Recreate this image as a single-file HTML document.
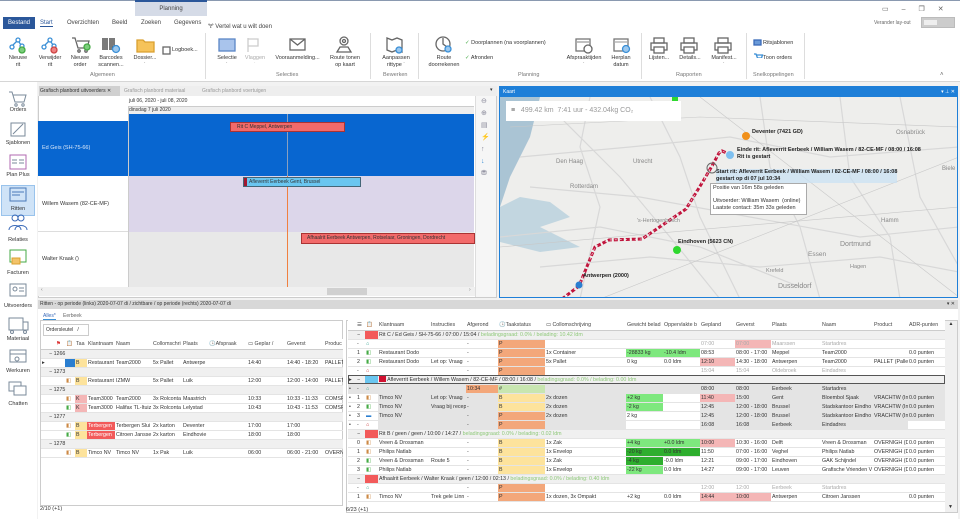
<!DOCTYPE html>
<html><head><meta charset="utf-8">
<style>
*{margin:0;padding:0;box-sizing:border-box}
body{width:960px;height:519px;overflow:hidden;background:#fff;font-family:"Liberation Sans",sans-serif;font-size:6px;color:#333;position:relative}
.a{position:absolute;white-space:nowrap}
.rl{font-size:5.5px;color:#333;text-align:center;line-height:6.5px}
.gl{font-size:5.5px;color:#777;top:72px}
.sep{position:absolute;top:33px;width:1px;height:46px;background:#ddd}
.sb{position:absolute;left:0;width:36px;text-align:center;font-size:5.5px;color:#333}
table{border-collapse:collapse;table-layout:fixed;position:absolute}
td{height:8.6px;font-size:5.3px;line-height:8px;white-space:nowrap;overflow:hidden;border-bottom:1px solid #e4e4e4;padding:0 1px}
.hd td{color:#444;background:#fff;border-bottom:1px solid #ccc;height:10px}
.g td{background:#f0f0f0}
.P{background:#f3a77a}.B{background:#fde39c}.H{background:#c8e6b0}
.gr{background:#7ee87e}.dg{background:#2eae2e}.pk{background:#f4b6b6}.gy{background:#e4e4e4}
.lg{color:#8fc97a}
.mut{color:#aaa}
</style></head><body>

<!-- title bar -->
<div class="a" style="left:0;top:0;width:960px;height:16px;background:#fff;border-top:1px solid #8a99b0"></div>
<div class="a" style="left:135px;top:0;width:72px;height:16px;background:#d5dbe7;border-top:2px solid #2b579a;font-size:6px;text-align:center;line-height:14px;color:#444">Planning</div>
<div class="a" style="left:882px;top:5px;font-size:7px;color:#666;letter-spacing:13px">▭–❐✕</div>
<!-- tabs -->
<div class="a" style="left:3px;top:17px;width:32px;height:12px;background:#2b579a;color:#fff;font-size:6px;text-align:center;line-height:12px">Bestand</div>
<div class="a" style="left:40px;top:20px;font-size:6px;color:#2b579a;border-bottom:1px solid #2b579a">Start</div>
<div class="a" style="left:67px;top:20px;font-size:6px;color:#444">Overzichten</div>
<div class="a" style="left:112px;top:20px;font-size:6px;color:#444">Beeld</div>
<div class="a" style="left:141px;top:20px;font-size:6px;color:#444">Zoeken</div>
<div class="a" style="left:174px;top:20px;font-size:6px;color:#444">Gegevens</div>
<div class="a" style="left:208px;top:20px;font-size:6px;color:#444">🝖 Vertel wat u wilt doen</div>
<div class="a" style="left:874px;top:20px;font-size:5px;color:#666">Verander lay-out</div>
<div class="a" style="left:921px;top:17px;width:34px;height:11px;background:#ccc;border:1px solid #bbb"><div style="position:absolute;left:2px;top:2px;width:13px;height:5px;background:#eee"></div></div>
<!-- ribbon -->
<div class="a" style="left:0;top:31px;width:960px;height:51px;background:#fff;border-bottom:1px solid #d6d6d6"></div>
<svg class="a" style="left:0;top:34px" width="960" height="24">
<g fill="none" stroke-width="1.3">
<g stroke="#3a8fd6"><circle cx="12" cy="13" r="2"/><circle cx="18" cy="6" r="2"/><circle cx="22" cy="12" r="2"/><path d="M13 11l4-4M19 8l2 3"/></g><circle cx="22" cy="16" r="3" fill="#7ccf7c" stroke="#4a4"/>
<g stroke="#3a8fd6"><circle cx="44" cy="13" r="2"/><circle cx="50" cy="6" r="2"/><circle cx="54" cy="12" r="2"/><path d="M45 11l4-4M51 8l2 3"/></g><circle cx="54" cy="16" r="3" fill="#f08080" stroke="#c44"/>
<path stroke="#666" d="M72 4h3l3 10h9l2-7H77"/><circle cx="79" cy="17" r="1.2" stroke="#666"/><circle cx="86" cy="17" r="1.2" stroke="#666"/><circle cx="87" cy="13" r="3" fill="#7ccf7c" stroke="#4a4"/>
<path stroke="#333" d="M103 4v12M105 4v12M107 4v12M110 4v12M112 4v12M114 4v12"/><circle cx="116" cy="15" r="3.5" fill="#9cc8ee" stroke="#3a8fd6"/>
<path d="M137 6h6l2 2h9v10h-17z" fill="#f6c35a" stroke="#d9a030"/>
<rect x="163" y="13" width="7" height="7" stroke="#666"/>
<rect x="219" y="5" width="16" height="12" fill="#a9c4ec" stroke="#5a86c6"/>
<path stroke="#ccc" d="M248 4v14M248 5h10v7h-10"/>
<rect x="290" y="5" width="15" height="11" stroke="#666"/><path stroke="#666" d="M290 5l7.5 6 7.5-6"/>
<circle cx="344" cy="7" r="4" stroke="#666"/><circle cx="344" cy="7" r="1.5" stroke="#666"/><path stroke="#666" d="M337 18l3-5h8l3 5z"/>
<path stroke="#666" d="M387 4l5 2 5-2 5 2v12l-5-2-5 2-5-2z"/><circle cx="399" cy="16" r="3" fill="#9cc8ee" stroke="#3a8fd6"/>
<circle cx="443" cy="10" r="7" stroke="#666"/><path stroke="#666" d="M443 4v6l4 3"/><circle cx="448" cy="15" r="3" fill="#9cc8ee" stroke="#3a8fd6"/>
<rect x="576" y="5" width="14" height="12" stroke="#777"/><path stroke="#aaa" d="M576 8h14"/><circle cx="588" cy="15" r="4" fill="#fff" stroke="#666"/>
<rect x="614" y="5" width="14" height="12" stroke="#777"/><path stroke="#aaa" d="M576 8h14M614 8h14"/><circle cx="626" cy="15" r="3.5" fill="#9cc8ee" stroke="#3a8fd6"/>
<g stroke="#666"><rect x="654" y="4" width="10" height="5"/><rect x="651" y="9" width="16" height="7"/><rect x="654" y="13" width="10" height="6" fill="#fff"/>
<rect x="684" y="4" width="10" height="5"/><rect x="681" y="9" width="16" height="7"/><rect x="684" y="13" width="10" height="6" fill="#fff"/>
<rect x="718" y="4" width="10" height="5"/><rect x="715" y="9" width="16" height="7"/><rect x="718" y="13" width="10" height="6" fill="#fff"/></g>
<rect x="754" y="6" width="7" height="5" fill="#6a9ad8" stroke="#3a6ab8"/>
<path stroke="#3a8fd6" d="M754 20h2l1.5 4h4l1-3h-6"/>
</g></svg>
<div class="a rl" style="left:6px;top:55px;width:24px">Nieuwe<br>rit</div>
<div class="a rl" style="left:36px;top:55px;width:28px">Verwijder<br>rit</div>
<div class="a rl" style="left:67px;top:55px;width:26px">Nieuwe<br>order</div>
<div class="a rl" style="left:96px;top:55px;width:30px">Barcodes<br>scannen...</div>
<div class="a rl" style="left:130px;top:55px;width:30px">Dossier...<br>˙</div>
<div class="a" style="left:172px;top:47px;font-size:5.5px">Logboek...</div>
<div class="a rl" style="left:212px;top:55px;width:30px">Selectie<br>˙</div>
<div class="a rl" style="left:240px;top:55px;width:30px;color:#aaa">Vlaggen<br>˙</div>
<div class="a rl" style="left:270px;top:55px;width:55px">Vooraanmelding...</div>
<div class="a rl" style="left:326px;top:55px;width:38px">Route tonen<br>op kaart</div>
<div class="a rl" style="left:378px;top:55px;width:36px">Aanpassen<br>rittype ˙</div>
<div class="a rl" style="left:424px;top:55px;width:40px">Route<br>doorrekenen</div>
<div class="a" style="left:465px;top:40px;font-size:5.5px"><span style="color:#4a4">✓</span> Doorplannen (na voorplannen)</div>
<div class="a" style="left:465px;top:55px;font-size:5.5px"><span style="color:#4a4">✓</span> Afronden</div>
<div class="a rl" style="left:562px;top:55px;width:44px">Afspraaktijden<br>˙</div>
<div class="a rl" style="left:606px;top:55px;width:30px">Herplan<br>datum</div>
<div class="a rl" style="left:645px;top:55px;width:28px">Lijsten...</div>
<div class="a rl" style="left:676px;top:55px;width:28px">Details...</div>
<div class="a rl" style="left:706px;top:55px;width:36px">Manifest...<br>˙</div>
<div class="a" style="left:763px;top:40px;font-size:5.5px">Ritsjablonen</div>
<div class="a" style="left:763px;top:55px;font-size:5.5px">Toon orders</div>
<div class="a gl" style="left:90px">Algemeen</div>
<div class="a gl" style="left:276px">Selecties</div>
<div class="a gl" style="left:383px">Bewerken</div>
<div class="a gl" style="left:518px">Planning</div>
<div class="a gl" style="left:676px">Rapporten</div>
<div class="a gl" style="left:753px">Snelkoppelingen</div>
<div class="sep" style="left:205px"></div><div class="sep" style="left:370px"></div><div class="sep" style="left:418px"></div><div class="sep" style="left:641px"></div><div class="sep" style="left:746px"></div><div class="sep" style="left:804px"></div>
<div class="a" style="left:940px;top:72px;font-size:6px;color:#666">˄</div>

<!-- app bg -->
<div class="a" style="left:0;top:82px;width:960px;height:437px;background:#f2f2f2"></div>
<!-- sidebar -->
<div class="a" style="left:0;top:82px;width:37px;height:437px;background:#fff"></div>
<div class="a" style="left:1px;top:185px;width:34px;height:31px;background:#cfe3f7;border:1px solid #99c3ec"></div>
<svg class="a" style="left:0;top:88px" width="37" height="310"><g fill="none" stroke="#7a8a9a" stroke-width="1">
<path d="M9 4h3l3 10h9l2-7H13"/><circle cx="16" cy="17" r="1.2"/><circle cx="23" cy="17" r="1.2"/>
<rect x="11" y="35" width="14" height="13"/><path d="M13 46l10-10"/>
<rect x="10" y="67" width="16" height="14" stroke="#b06ab0"/><path d="M12 72h5M12 75h5M19 72h5M19 75h5"/>
<rect x="10" y="100" width="16" height="13" stroke="#4a7ab8"/><path d="M12 104h12M12 107h8" stroke="#4a7ab8"/>
<circle cx="15" cy="130" r="3" stroke="#3a6ab8"/><circle cx="21" cy="130" r="3" stroke="#3a6ab8"/><path d="M9 142c0-6 12-6 12 0M15 142c0-6 12-6 12 0" stroke="#3a6ab8"/>
<rect x="10" y="162" width="16" height="12" stroke="#4a4"/><rect x="12" y="170" width="8" height="6" fill="#f3c36a" stroke="#d9a030"/>
<rect x="10" y="196" width="16" height="12"/><circle cx="15" cy="201" r="2"/><path d="M19 200h5M19 203h5"/>
<rect x="9" y="230" width="14" height="12"/><rect x="23" y="234" width="5" height="8"/><circle cx="12" cy="244" r="1.5"/><circle cx="25" cy="244" r="1.5"/>
<rect x="10" y="262" width="16" height="12"/><path d="M10 266h16"/><circle cx="17" cy="271" r="2"/>
<rect x="9" y="294" width="12" height="9"/><rect x="14" y="298" width="12" height="9" fill="#fff"/>
</g></svg>
<div class="sb" style="top:107px">Orders</div>
<div class="sb" style="top:140px">Sjablonen</div>
<div class="sb" style="top:172px">Plan Plus</div>
<div class="sb" style="top:206px">Ritten</div>
<div class="sb" style="top:237px">Relaties</div>
<div class="sb" style="top:270px">Facturen</div>
<div class="sb" style="top:303px">Uitvoerders</div>
<div class="sb" style="top:336px">Materiaal</div>
<div class="sb" style="top:368px">Werkuren</div>
<div class="sb" style="top:401px">Chatten</div>

<!-- gantt -->
<div class="a" style="left:38px;top:86px;width:459px;height:212px;background:#fff;border:1px solid #ccc"></div>
<div class="a" style="left:38px;top:86px;width:459px;height:10px;background:#eee"></div>
<div class="a" style="left:39px;top:86px;width:81px;height:10px;background:#d0d0d0;font-size:5px;line-height:10px;padding-left:1px">Grafisch planbord uitvoerders ✕</div>
<div class="a" style="left:124px;top:88px;font-size:5px;color:#999">Grafisch planbord materiaal</div>
<div class="a" style="left:202px;top:88px;font-size:5px;color:#999">Grafisch planbord voertuigen</div>
<div class="a" style="left:490px;top:87px;font-size:5px">▾</div>
<div class="a" style="left:129px;top:98px;font-size:5px">juli 06, 2020 - juli 08, 2020</div>
<div class="a" style="left:128px;top:106px;width:346px;height:8px;background:#eee;border-top:1px solid #ccc;font-size:5px;line-height:7px;padding-left:1px">dinsdag 7 juli 2020</div>
<div class="a" style="left:128px;top:114px;width:346px;height:7px;background:#0866d0"></div>
<div class="a" style="left:38px;top:121px;width:436px;height:55px;background:#0866d0;color:#dce8f8;font-size:5.5px;line-height:55px;padding-left:4px">Ed Geis (SH-75-66)</div>
<div class="a" style="left:38px;top:176px;width:90px;height:56px;background:#fff;font-size:5.5px;line-height:56px;padding-left:4px;border-bottom:1px solid #ddd">Willem Wasem (82-CE-MF)</div>
<div class="a" style="left:128px;top:176px;width:346px;height:56px;background:#dcd6ea"></div>
<div class="a" style="left:38px;top:232px;width:90px;height:55px;background:#fff;font-size:5.5px;line-height:55px;padding-left:4px">Walter Kraak ()</div>
<div class="a" style="left:128px;top:232px;width:346px;height:55px;background:#e8e8e8"></div>
<div class="a" style="left:128px;top:106px;width:1px;height:181px;background:#ccc"></div>
<div class="a" style="left:287px;top:114px;width:1px;height:62px;background:#8aa0c0"></div>
<div class="a" style="left:287px;top:176px;width:1px;height:111px;background:#f08040"></div>
<div class="a" style="left:230px;top:122px;width:115px;height:10px;background:#f26a6a;border:1px solid #a33;font-size:5px;line-height:8px;padding-left:6px">Rit C Meppel, Antwerpen</div>
<div class="a" style="left:243px;top:177px;width:118px;height:10px;background:#6ac6f0;border:1px solid #467;font-size:5px;line-height:8px;padding-left:5px">Afleverrit Eerbeek Gent, Brussel</div>
<div class="a" style="left:244px;top:178px;width:3px;height:8px;background:#a01830"></div>
<div class="a" style="left:301px;top:233px;width:174px;height:11px;background:#f26a6a;border:1px solid #a33;font-size:5px;line-height:9px;padding-left:5px">Afhaalrit Eerbeek Antwerpen, Rotselaar, Groningen, Dordrecht</div>
<div class="a" style="left:38px;top:287px;width:437px;height:9px;background:#f0f0f0;font-size:5px;color:#777;padding-left:3px">‹<span style="position:absolute;left:289px;top:1px;width:40px;height:7px;background:#d0d0d0"></span><span style="position:absolute;left:431px">›</span></div>
<div class="a" style="left:475px;top:96px;width:21px;height:201px;background:#f6f6f6;border-left:1px solid #ddd;font-size:7px;color:#889;line-height:12px;padding-left:5px">⊖<br>⊕<br>▤<br><span style="color:#f0a030">⚡</span><br>↑<br><span style="color:#3a8fd6">↓</span><br>⛃</div>

<!-- map -->
<div class="a" style="left:499px;top:86px;width:459px;height:212px;border:1px solid #1e7fd8;background:#eeeeec;overflow:hidden">
<div style="position:absolute;left:0;top:0;width:459px;height:10px;background:#1e7fd8;color:#fff;font-size:5px;line-height:10px;padding-left:3px">Kaart<span style="position:absolute;right:4px">▾ ⊥ ✕</span></div>
<svg style="position:absolute;left:0;top:10px" width="459" height="202">
<path d="M0 0h40l-10 40-20 40-10 30z" fill="#aac4d4"/>
<path d="M0 110l20-10 30 5 20 15-30 10 40 20-40 5-40-10z" fill="#c2d6e0"/>
<g fill="none" stroke="#d8d8d8" stroke-width="1.2">
<path d="M20 60L130 50 230 40 330 60 459 50"/><path d="M30 90L140 100 250 120 360 140 459 130"/><path d="M60 20L120 80 170 140 220 202"/><path d="M150 0L180 60 200 120 240 202"/><path d="M260 0L270 70 300 130 320 202"/><path d="M340 0L350 80 390 140 400 202"/><path d="M400 0L420 100 459 170"/><path d="M40 170L150 160 260 170 380 160 459 175"/><path d="M0 140L100 130 200 150 300 190"/><path d="M90 0L80 50 100 110 80 202"/>
</g>
<g fill="none" stroke="#c8c8c8" stroke-width="0.6"><path d="M10 30L200 20 459 30"/><path d="M0 150L459 110"/><path d="M100 202L459 60"/><path d="M200 0L459 200"/></g>
<path d="M62 202L79 189 95 150 109 143 142 142 186 112 202 86 212 69 219 56 222 54 229 57" fill="none" stroke="#c0143c" stroke-width="3" stroke-dasharray="4 2"/>
<path d="M62 202L79 189 95 150 109 143 142 142 186 112 202 86 212 69 219 56 222 54 229 57" fill="none" stroke="#fff" stroke-width="0.6" stroke-dasharray="2 3"/>
<circle cx="246" cy="39" r="4" fill="#f0901a"/><circle cx="230" cy="58" r="4" fill="#7ec0f0"/><circle cx="177" cy="153" r="4" fill="#2ed82e"/><circle cx="79" cy="188" r="3.5" fill="#2a7ed0"/><circle cx="212" cy="71" r="5" fill="none" stroke="#666"/>
<rect x="172" y="0" width="6" height="4" fill="#2ed82e"/>
</svg>
<div style="position:absolute;left:6px;top:14px;width:175px;height:20px;background:#fff;font-size:7px;color:#999;line-height:20px;padding-left:5px"><b style="color:#555">≡</b>&nbsp;&nbsp; 499.42 km &nbsp;7:41 uur - 432.04kg CO₂</div>
<div style="position:absolute;left:56px;top:72px;font-size:6px;color:#888">Den Haag</div>
<div style="position:absolute;left:133px;top:72px;font-size:6px;color:#888">Utrecht</div>
<div style="position:absolute;left:70px;top:97px;font-size:6px;color:#888">Rotterdam</div>
<div style="position:absolute;left:137px;top:131px;font-size:5.5px;color:#888">'s-Hertogenbosch</div>
<div style="position:absolute;left:340px;top:154px;font-size:7px;color:#888">Dortmund</div>
<div style="position:absolute;left:308px;top:164px;font-size:6.5px;color:#888">Essen</div>
<div style="position:absolute;left:266px;top:181px;font-size:5.5px;color:#888">Krefeld</div>
<div style="position:absolute;left:278px;top:196px;font-size:7px;color:#888">Dusseldorf</div>
<div style="position:absolute;left:350px;top:177px;font-size:5.5px;color:#888">Hagen</div>
<div style="position:absolute;left:381px;top:131px;font-size:6px;color:#888">Hamm</div>
<div style="position:absolute;left:396px;top:43px;font-size:6px;color:#888">Osnabrück</div>
<div style="position:absolute;left:442px;top:79px;font-size:6px;color:#888">Biele</div>
<div style="position:absolute;left:252px;top:42px;font-size:5.5px;font-weight:bold;color:#222">Deventer (7421 GD)</div>
<div style="position:absolute;left:237px;top:60px;font-size:5.5px;font-weight:bold;color:#222;line-height:7px">Einde rit: Afleverrit Eerbeek / William Wasem / 82-CE-MF / 08:00 / 16:08<br>Rit is gestart</div>
<div style="position:absolute;left:216px;top:82px;font-size:5.5px;font-weight:bold;color:#222;line-height:7px;background:rgba(200,225,245,.7)">Start rit: Afleverrit Eerbeek / William Wasem / 82-CE-MF / 08:00 / 16:08<br>gestart op di 07 jul 10:34</div>
<div style="position:absolute;left:210px;top:96px;width:97px;height:32px;background:#fff;border:1px solid #aaa;font-size:5.5px;line-height:6.5px;padding:1px 2px">Positie van 16m 58s geleden<br><br>Uitvoerder: William Wasem &nbsp;(online)<br>Laatste contact: 35m 33s geleden</div>
<div style="position:absolute;left:178px;top:152px;font-size:5.5px;font-weight:bold;color:#222">Eindhoven (5623 CN)</div>
<div style="position:absolute;left:83px;top:186px;font-size:5.5px;font-weight:bold;color:#222">Antwerpen (2000)</div>
</div>

<!-- bottom -->
<div class="a" style="left:38px;top:300px;width:920px;height:9px;background:#d8d8d8;font-size:5px;line-height:9px;padding-left:2px">Ritten - op periode (links) 2020-07-07 di / zichtbare / op periode (rechts) 2020-07-07 di<span style="position:absolute;right:3px">▾ ✕</span></div>
<div class="a" style="left:38px;top:309px;width:920px;height:210px;background:#fff"></div>
<div class="a" style="left:43px;top:313px;font-size:5px;color:#3a6ab8;border-bottom:1px solid #3a8fd6">Alles*</div>
<div class="a" style="left:63px;top:313px;font-size:5px;color:#666">Eerbeek</div>
<div class="a" style="left:40px;top:320px;width:303px;height:186px;border:1px solid #ccc"></div>
<div class="a" style="left:43px;top:324px;width:46px;height:12px;border:1px solid #ccc;font-size:5px;line-height:10px;padding-left:2px">Ordersleutel &nbsp;&nbsp;/</div>

<table style="left:41px;top:339px;width:302px">
<colgroup><col style="width:7px"><col style="width:7px"><col style="width:10px"><col style="width:10px"><col style="width:12px"><col style="width:28px"><col style="width:37px"><col style="width:30px"><col style="width:26px"><col style="width:39px"><col style="width:39px"><col style="width:38px"><col style="width:19px"></colgroup>
<tr class="hd"><td></td><td></td><td style="color:#d33">⚑</td><td>📋</td><td>Taa</td><td>Klantnaam</td><td>Naam</td><td>Collomschri</td><td>Plaats</td><td>🕒Afspraak</td><td>▭ Geplar /</td><td>Geverst</td><td>Produc</td></tr>
<tr class="g"><td></td><td colspan="12">− 1266</td></tr>
<tr><td>▸</td><td></td><td></td><td style="background:#2a7ed0"></td><td class="B">B</td><td>Restaurant</td><td>Team2000</td><td>5x Pallet</td><td>Antwerpe</td><td></td><td>14:40</td><td>14:40 - 18:20</td><td>PALLET</td></tr>
<tr class="g"><td></td><td colspan="12">− 1273</td></tr>
<tr><td></td><td></td><td></td><td style="color:#c84">◧</td><td class="B">B</td><td>Restaurant</td><td>IZMW</td><td>5x Pallet</td><td>Luik</td><td></td><td>12:00</td><td>12:00 - 14:00</td><td>PALLET</td></tr>
<tr class="g"><td></td><td colspan="12">− 1275</td></tr>
<tr><td></td><td></td><td></td><td style="color:#c84">◧</td><td class="pk">K</td><td>Team3000</td><td>Team2000</td><td>3x Rolconta</td><td>Maastrich</td><td></td><td>10:33</td><td>10:33 - 11:33</td><td>COMSF</td></tr>
<tr><td></td><td></td><td></td><td style="color:#4a4">◧</td><td class="pk">K</td><td>Team3000</td><td>Halifax TL-Ituiz</td><td>3x Rolconta</td><td>Lelystad</td><td></td><td>10:43</td><td>10:43 - 11:53</td><td>COMSF</td></tr>
<tr class="g"><td></td><td colspan="12">− 1277</td></tr>
<tr><td></td><td></td><td></td><td style="color:#c84">◧</td><td class="B">B</td><td style="background:#f25a5a;color:#fff">Terbergen</td><td>Terbergen Slui</td><td>2x karton</td><td>Deventer</td><td></td><td>17:00</td><td>17:00</td><td></td></tr>
<tr><td></td><td></td><td></td><td style="color:#4a4">◧</td><td class="B">B</td><td style="background:#f25a5a;color:#fff">Terbergen</td><td>Citroen Jansse</td><td>2x karton</td><td>Eindhovie</td><td></td><td>18:00</td><td>18:00</td><td></td></tr>
<tr class="g"><td></td><td colspan="12">− 1278</td></tr>
<tr><td></td><td></td><td></td><td style="color:#c84">◧</td><td class="B">B</td><td>Timco NV</td><td>Timco NV</td><td>1x Pak</td><td>Luik</td><td></td><td>06:00</td><td>06:00 - 21:00</td><td>OVERN</td></tr>
</table>
<div class="a" style="left:40px;top:506px;font-size:5.5px">2/10 (+1)</div>

<div class="a" style="left:346px;top:320px;width:612px;height:193px;border:1px solid #ccc"></div>
<div class="a" style="left:945px;top:321px;width:12px;height:191px;background:#f0f0f0;font-size:5px;text-align:center">▲<span style="position:absolute;left:3px;bottom:2px">▼</span></div>
<table style="left:348px;top:320px;width:597px">
<colgroup><col style="width:8px"><col style="width:9px"><col style="width:13px"><col style="width:52px"><col style="width:36px"><col style="width:32px"><col style="width:47px"><col style="width:81px"><col style="width:37px"><col style="width:37px"><col style="width:35px"><col style="width:36px"><col style="width:50px"><col style="width:52px"><col style="width:35px"><col style="width:37px"></colgroup>
<tr class="hd"><td></td><td>☰</td><td>📋</td><td>Klantnaam</td><td>Instructies</td><td>Afgerond</td><td>🕒Taakstatus</td><td>▭ Collomschrijving</td><td>Gewicht belad</td><td>Oppervlakte b</td><td>Gepland</td><td>Geverst</td><td>Plaats</td><td>Naam</td><td>Product</td><td>ADR-punten</td></tr>
<tr class="g"><td></td><td>−</td><td style="background:#f25a5a"></td><td colspan="13">Rit C / Ed Geis / SH-75-66 / 07:00 / 15:04 / <span class="lg">beladingsgraad: 0.0% / belading: 10.42 ldm</span></td></tr>
<tr><td></td><td>-</td><td style="color:#4a9">⌂</td><td></td><td></td><td>-</td><td class="P">P</td><td></td><td></td><td></td><td class="mut">07:00</td><td class="pk mut">07:00</td><td class="mut">Maarssen</td><td class="mut">Startadres</td><td></td><td></td></tr>
<tr><td></td><td>1</td><td style="color:#4a4">◧</td><td>Restaurant Dodo</td><td></td><td>-</td><td class="P">P</td><td>1x Container</td><td class="gr">-28833 kg</td><td class="gr">-10.4 ldm</td><td>08:53</td><td>08:00 - 17:00</td><td>Meppel</td><td>Team2000</td><td></td><td>0.0 punten</td></tr>
<tr><td></td><td>2</td><td style="color:#4a4">◧</td><td>Restaurant Dodo</td><td>Let op: Vraag</td><td>-</td><td class="P">P</td><td>5x Pallet</td><td>0 kg</td><td>0.0 ldm</td><td class="pk">12:10</td><td>14:30 - 18:00</td><td>Antwerpen</td><td>Team2000</td><td>PALLET (Pallet</td><td>0.0 punten</td></tr>
<tr><td></td><td>-</td><td style="color:#c44">⌂</td><td></td><td></td><td>-</td><td class="P">P</td><td></td><td></td><td></td><td class="mut">15:04</td><td class="mut">15:04</td><td class="mut">Oldebroek</td><td class="mut">Eindadres</td><td></td><td></td></tr>
<tr class="g" style="outline:1px solid #555;outline-offset:-1px"><td>▸</td><td>−</td><td style="background:#6ac6f0"></td><td colspan="13"><span style="display:inline-block;width:7px;height:6px;background:#d01030;vertical-align:middle"></span> Afleverrit Eerbeek / Willem Wasem / 82-CE-MF / 08:00 / 16:08 / <span class="lg">beladingsgraad: 0.0% / belading: 0.00 ldm</span></td></tr>
<tr class="gy"><td>•</td><td>-</td><td style="color:#4a9">⌂</td><td class="gy"></td><td class="gy"></td><td class="P">10:34</td><td class="H">#</td><td class="gy"></td><td></td><td></td><td class="gy">08:00</td><td class="gy">08:00</td><td class="gy">Eerbeek</td><td class="gy">Startadres</td><td class="gy"></td><td></td></tr>
<tr><td>•</td><td>1</td><td style="color:#c84">◧</td><td class="gy">Timco NV</td><td class="gy">Let op: Vraag</td><td class="gy">-</td><td class="B">B</td><td class="gy">2x dozen</td><td class="gr">+2 kg</td><td></td><td class="pk">11:40</td><td class="gy">15:00</td><td class="gy">Gent</td><td class="gy">Bloembol Sjaak</td><td class="gy">VRACHTW (In</td><td class="gy">0.0 punten</td></tr>
<tr><td>•</td><td>2</td><td style="color:#4a4">◧</td><td class="gy">Timco NV</td><td class="gy">Vraag bij recep</td><td class="gy">-</td><td class="B">B</td><td class="gy">2x dozen</td><td class="gr">-2 kg</td><td></td><td class="gy">12:45</td><td class="gy">12:00 - 18:00</td><td class="gy">Brussel</td><td class="gy">Stadskantoor Eindho</td><td class="gy">VRACHTW (In</td><td class="gy">0.0 punten</td></tr>
<tr><td>•</td><td>3</td><td style="color:#2a7ed0">▬</td><td class="gy">Timco NV</td><td class="gy"></td><td class="gy">-</td><td class="P">P</td><td class="gy">2x dozen</td><td>2 kg</td><td></td><td class="gy">12:45</td><td class="gy">12:00 - 18:00</td><td class="gy">Brussel</td><td class="gy">Stadskantoor Eindho</td><td class="gy">VRACHTW (In</td><td class="gy">0.0 punten</td></tr>
<tr><td>•</td><td>-</td><td style="color:#c44">⌂</td><td class="gy"></td><td class="gy"></td><td class="gy">-</td><td class="P">P</td><td class="gy"></td><td></td><td></td><td class="gy">16:08</td><td class="gy">16:08</td><td class="gy">Eerbeek</td><td class="gy">Eindadres</td><td class="gy"></td><td></td></tr>
<tr class="g"><td></td><td>−</td><td style="background:#f25a5a"></td><td colspan="13">Rit B / geen / geen / 10:00 / 14:27 / <span class="lg">beladingsgraad: 0.0% / belading: 0.02 ldm</span></td></tr>
<tr><td></td><td>0</td><td style="color:#c84">◧</td><td>Vreen &amp; Drossman</td><td></td><td>-</td><td class="B">B</td><td>1x Zak</td><td class="gr">+4 kg</td><td class="gr">+0.0 ldm</td><td class="pk">10:00</td><td>10:30 - 16:00</td><td>Delft</td><td>Vreen &amp; Drossman</td><td>OVERNIGH (D</td><td>0.0 punten</td></tr>
<tr><td></td><td>1</td><td style="color:#c84">◧</td><td>Philips Natlab</td><td></td><td>-</td><td class="B">B</td><td>1x Envelop</td><td class="dg">-20 kg</td><td class="dg">0.0 ldm</td><td>11:50</td><td>07:00 - 16:00</td><td>Veghel</td><td>Philips Natlab</td><td>OVERNIGH (D</td><td>0.0 punten</td></tr>
<tr><td></td><td>2</td><td style="color:#4a4">◧</td><td>Vreen &amp; Drossman</td><td>Route 5</td><td>-</td><td class="B">B</td><td>1x Zak</td><td class="dg">-4 kg</td><td>-0.0 ldm</td><td>12:21</td><td>09:00 - 17:00</td><td>Eindhoven</td><td>GAK Schijndel</td><td>OVERNIGH (D</td><td>0.0 punten</td></tr>
<tr><td></td><td>3</td><td style="color:#4a4">◧</td><td>Philips Natlab</td><td></td><td>-</td><td class="B">B</td><td>1x Envelop</td><td class="gr">-22 kg</td><td>0.0 ldm</td><td>14:27</td><td>09:00 - 17:00</td><td>Leuven</td><td>Grafische Vrienden V</td><td>OVERNIGH (D</td><td>0.0 punten</td></tr>
<tr class="g"><td></td><td>−</td><td style="background:#f25a5a"></td><td colspan="13">Afhaalrit Eerbeek / Walter Kraak / geen / 12:00 / 02:13 / <span class="lg">beladingsgraad: 0.0% / belading: 0.40 ldm</span></td></tr>
<tr><td></td><td>-</td><td style="color:#4a9">⌂</td><td></td><td></td><td>-</td><td class="P">P</td><td></td><td></td><td></td><td class="mut">12:00</td><td class="mut">12:00</td><td class="mut">Eerbeek</td><td class="mut">Startadres</td><td></td><td></td></tr>
<tr><td></td><td>1</td><td style="color:#c84">◧</td><td>Timco NV</td><td>Trek gele Linn</td><td>-</td><td class="P">P</td><td>1x dozen, 3x Ompakt</td><td>+2 kg</td><td>0.0 ldm</td><td class="pk">14:44</td><td class="pk">10:00</td><td>Antwerpen</td><td>Citroen Janssen</td><td></td><td>0.0 punten</td></tr>
</table>
<div class="a" style="left:346px;top:507px;font-size:5.5px">6/23 (+1)</div>
</body></html>
